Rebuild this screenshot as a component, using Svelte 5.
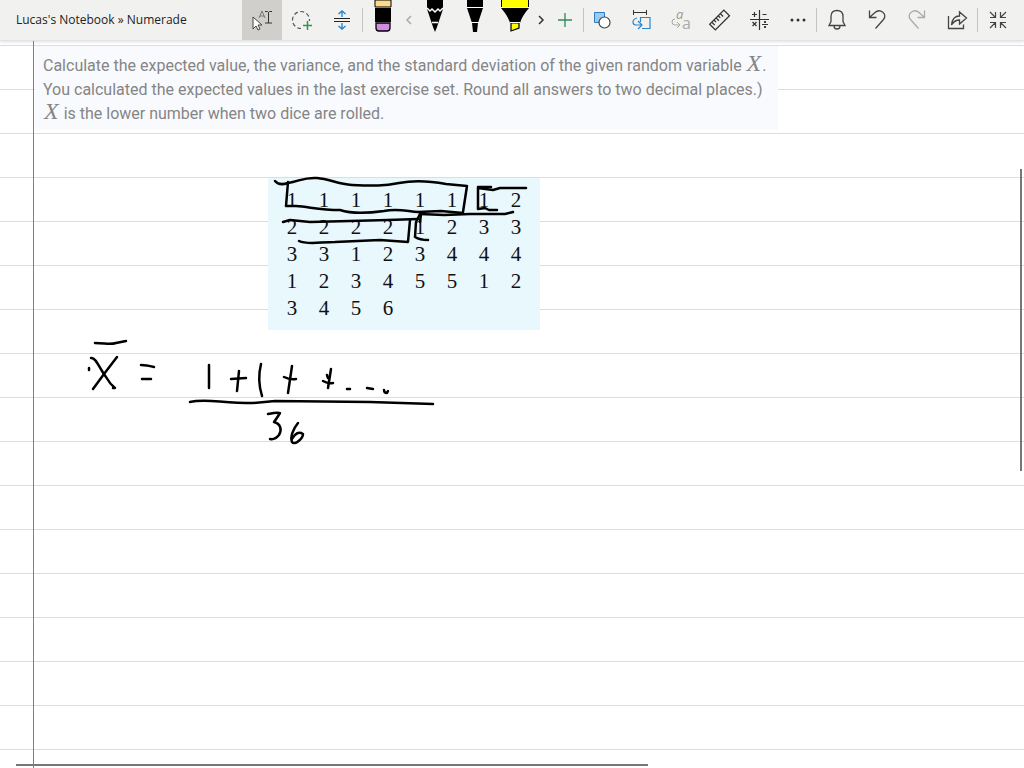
<script>
  const rolls = [
    [1, 1, 1, 1, 1, 1, 1, 2],
    [2, 2, 2, 2, 1, 2, 3, 3],
    [3, 3, 1, 2, 3, 4, 4, 4],
    [1, 2, 3, 4, 5, 5, 1, 2],
    [3, 4, 5, 6],
  ];

  // pen strokes, in page coordinates
  const strokes = [
    // boxes round the dice rolls
    "M275 181 Q279 186 288 183 C300 181 304 177 317 178 C330 179 337 184 352 185 C374 186 384 186 399 183 C414 180 430 181 446 184 L467 186 L463 212",
    "M288 182 L286 206 L296 206 C310 207 320 210 340 210 C352 214 370 213 384 211 C397 208 406 211 418 212 L441 211 L463 213",
    "M526 188 L500 188 L493 190 L478 188 L478 209 L485 208 L489 210 L497 210",
    "M478 187 L491 187",
    "M283 222 L290 220 L310 222 L350 221 L388 220 L418 219",
    "M299 241 C307 245 320 242 335 242 L380 240 L408 242 L410 220",
    "M420 214 L416 222 L415 237 Q420 240 428 240",
    "M420 214 L444 215 L470 214 L505 214 L513 212",
    "M421 214 L420 222",
    // x bar =
    "M95 343 C105 343 110 345 116 343 L126 341",
    "M91 358 C96 357 99 368 106 377 Q110 384 115 388 L113 388",
    "M117 357 L104 374 L93 389",
    "M89 368 L89 370",
    "M141 365 Q146 365 154 367",
    "M142 379 L151 379",
    // numerator
    "M209 365 L209 388",
    "M231 379 L246 378",
    "M239 371 L237 391",
    "M261 364 Q257 380 262 396",
    "M284 377 Q290 380 296 379",
    "M292 366 L288 393",
    "M323 381 Q328 384 333 383",
    "M331 369 L328 388",
    "M327 375 L328 378",
    "M347 389 L350 389",
    "M367 388 L373 389",
    "M384 390 Q384 393 387 393 L388 391",
    // fraction bar
    "M190 402 C205 398 220 403 253 403 L275 401 L370 402 L433 404",
    // denominator
    "M268 414 Q278 412 280 413 Q277 418 274 422 C281 424 282 430 279 435 Q275 440 270 439",
    "M298 423 C293 429 290 437 292 442 C295 446 303 438 303 434 Q297 430 292 439",
  ];
</script>

<div class="page">
  <header>
    <h1>Lucas's Notebook » Numerade</h1>
    <div class="group">
      <button class="tool active" aria-label="Select and type">
        <svg width="24" height="24" viewBox="0 0 24 24">
          <path d="M3 9v12l3-3 2 4 2-1-2-4h4z" fill="#fff" stroke="#444" />
          <path d="M9 10l3-7 3 7M10 8h4" fill="none" stroke="#777" />
          <path d="M15 3.500h2.500l1 1 1-1h2.500M18.500 4v11M15 15h7" fill="none" stroke="#333" />
        </svg>
      </button>
      <button class="tool" aria-label="Lasso select">
        <svg width="24" height="24" viewBox="0 0 24 24">
          <circle cx="11" cy="12" r="8.5" fill="none" stroke="#555" stroke-width="1.2" stroke-dasharray="4 2.5" />
          <path d="M11 13h12v10h-12z" fill="#f2f2f1" />
          <path d="M17.500 13v9M13 17.500h9" stroke="#2c9a4c" stroke-width="1.5" />
        </svg>
      </button>
      <button class="tool" aria-label="Insert space">
        <svg width="24" height="24" viewBox="0 0 24 24">
          <path d="M4 10.500h16M4 13.500h16" stroke="#222" stroke-width="1.2" />
          <path d="M12 9V3M8.500 6l3.500-3 3.500 3M12 15v6M8.500 18l3.500 3 3.500-3" fill="none" stroke="#2a86cc" stroke-width="1.400" />
        </svg>
      </button>
    </div>
    <div class="group">
      <button class="tool" aria-label="Eraser">
        <svg width="40" height="40" viewBox="0 0 40 40">
          <path d="M12 0h16v7h-16z" fill="#f9d98a" stroke="#000" />
          <path d="M12 8h16v14h-16z" />
          <path d="M13 23h14v5q0 3-3 3h-8q-3 0-3-3z" fill="#d18be0" stroke="#000" stroke-width="1.300" />
        </svg>
      </button>
      <button class="step" aria-label="Previous pens">
        <svg width="8" height="12" viewBox="0 0 8 12"><path d="M6 2L2 6l4 4" fill="none" stroke="#aaa" stroke-width="1.500" /></svg>
      </button>
      <button class="tool" aria-label="Pencil">
        <svg width="40" height="40" viewBox="0 0 40 40">
          <path d="M12 0h16v9l-6 18-2 5-2-5-6-18z" />
          <path d="M12 8l3 3 2-2 3 3 3-3 2 2 3-3M17 22.500h6" fill="none" stroke="#fff" stroke-width="1.500" />
        </svg>
      </button>
      <button class="tool" aria-label="Pen">
        <svg width="40" height="40" viewBox="0 0 40 40">
          <path d="M12 0h16v8l-5 15-1 9h-4l-1-9-5-15z" />
          <path d="M12 7.500h16M16 22.500h8" stroke="#fff" />
        </svg>
      </button>
      <button class="tool" aria-label="Highlighter">
        <svg width="40" height="40" viewBox="0 0 40 40">
          <path d="M6 0h28v8q-7 8-9 15h-10q-2-7-9-15z" />
          <path d="M7 0h26v7h-26z" fill="#ff0" />
          <path d="M16 23h8v5l-8 3z" fill="#ff0" stroke="#000" stroke-width="1.200" />
          <path d="M6 7.500h28M15 22.500h10" stroke="#fff" />
        </svg>
      </button>
      <button class="step" aria-label="More pens">
        <svg width="8" height="12" viewBox="0 0 8 12"><path d="M2 2l4 4-4 4" fill="none" stroke="#333" stroke-width="1.500" /></svg>
      </button>
      <button class="add" aria-label="Add pen">
        <svg width="16" height="16" viewBox="0 0 16 16"><path d="M8 1v14M1 8h14" stroke="#2c8a5a" stroke-width="1.300" /></svg>
      </button>
    </div>
    <div class="group wide">
      <button class="tool" aria-label="Shapes">
        <svg width="24" height="24" viewBox="0 0 24 24">
          <path d="M2.500 4.500h10v10h-10z" fill="#9bcbf0" stroke="#2a7fc4" />
          <circle cx="12.500" cy="14.500" r="5.500" fill="#fff" stroke="#444" stroke-width="1.200" />
        </svg>
      </button>
      <button class="tool" aria-label="Ink to shape">
        <svg width="24" height="24" viewBox="0 0 24 24">
          <path d="M2.500 2v5M15.500 2v5M2 4.500h14" stroke="#333" />
          <path d="M9.500 14v-4.500h9.500v11h-8M6 10q-4 1-4 4t3 3h5M7 13l4 4-4 4" fill="none" stroke="#2a86cc" stroke-width="1.200" />
        </svg>
      </button>
      <button class="tool" aria-label="Ink to text" disabled>
        <svg width="32" height="36" viewBox="0 0 32 36">
          <text x="10" y="17" font-size="13" font-style="italic" fill="#999">a</text>
          <text x="16" y="27" font-size="16" fill="#aaa">a</text>
          <path d="M9 17q-3 0-3 3 0 3 3 3h5M11 20l3 3-3 3" fill="none" stroke="#aaa" />
        </svg>
      </button>
      <button class="tool" aria-label="Ruler">
        <svg width="24" height="24" viewBox="0 0 24 24">
          <g fill="none" stroke="#333" stroke-width="1.300" transform="rotate(-45 12 12)">
            <path d="M1 7h20v8h-20z" />
            <path d="M4 7v4M7 7v3M10 7v4M13 7v3M16 7v4" />
          </g>
        </svg>
      </button>
      <button class="tool" aria-label="Math">
        <svg width="24" height="24" viewBox="0 0 24 24">
          <path d="M11.500 2v20M2 11.500h19M4 6.500h5M6.500 4v5M14.500 6.500h4M4.500 14l4 4M8.500 14l-4 4M14 16.500h6" stroke="#333" stroke-width="1.200" />
          <circle cx="17" cy="14" r="1" /><circle cx="17" cy="19" r="1" />
        </svg>
      </button>
      <button class="more" aria-label="More options">
        <svg width="16" height="4" viewBox="0 0 16 4" fill="#333"><circle cx="2" cy="2" r="1.500" /><circle cx="8" cy="2" r="1.500" /><circle cx="14" cy="2" r="1.500" /></svg>
      </button>
    </div>
    <div class="group">
      <button class="tool" aria-label="Notifications">
        <svg width="24" height="24" viewBox="0 0 24 24" fill="none" stroke="#444" stroke-width="1.300">
          <path d="M4 17.500h16l-2-4v-5q0-6-6-6t-6 6v5zM9 18q0 3 3 3t3-3" />
        </svg>
      </button>
      <button class="tool" aria-label="Undo">
        <svg width="24" height="24" viewBox="0 0 24 24" fill="none" stroke="#444" stroke-width="1.300">
          <path d="M4.500 2.500v7h7M5 9L10 4.500C15 0 23 6 18.500 11.500L10.500 20.500" />
        </svg>
      </button>
      <button class="tool" aria-label="Redo" disabled>
        <svg width="24" height="24" viewBox="0 0 24 24" fill="none" stroke="#aaa" stroke-width="1.300">
          <path d="M19.500 2.500v7h-7M19 9L14 4.500C9 0 1 6 5.500 11.500L13.500 20.500" />
        </svg>
      </button>
      <button class="tool" aria-label="Share">
        <svg width="24" height="24" viewBox="0 0 24 24" fill="none" stroke="#444" stroke-width="1.300">
          <path d="M3.500 8v12.500h15v-4M6.500 17q1-9 8-9v-4l7 6-7 6v-4q-5 0-8 5z" />
        </svg>
      </button>
    </div>
    <div class="group">
      <button class="tool" aria-label="Exit full screen">
        <svg width="24" height="24" viewBox="0 0 24 24" fill="none" stroke="#444" stroke-width="1.200">
          <path d="M4 4l5 5M9.500 4v5.500h-5.500M20 4l-5 5M14.500 4v5.500h5.500M4 20l5-5M9.500 20v-5.500h-5.500M20 20l-5-5M14.500 20v-5.500h5.500" />
        </svg>
      </button>
    </div>
  </header>

  <main>
    <!-- problem statement -->
    <section>
      <p>
        Calculate the expected value, the variance, and the standard deviation of the given random variable <i>X</i>.<br />
        You calculated the expected values in the last exercise set. Round all answers to two decimal places.)<br />
        <i>X</i> is the lower number when two dice are rolled.
      </p>
    </section>

    <!-- every lower number -->
    <table>
      <tbody>
        {#each rolls as row}
          <tr>
            {#each row as n}
              <td>{n}</td>
            {/each}
          </tr>
        {/each}
      </tbody>
    </table>
  </main>

  <svg class="ink" aria-hidden="true">
    {#each strokes as d}
      <path {d} />
    {/each}
  </svg>
  <div class="bar down"></div>
  <div class="bar across"></div>
</div>

<style>
  :global(body) {
    margin: 0;
  }
  .page {
    position: relative;
    display: flex;
    flex-direction: column;
    min-height: 100vh;
    overflow: hidden;
    background: #fff;
  }
  header {
    display: flex;
    align-items: center;
    height: 40px;
    padding-right: 6px;
    border-bottom: 1px solid #e2e3e4;
    background: #f1f1f0;
    box-shadow: 0 1px 3px #dde0e2;
  }
  h1 {
    flex: 1;
    margin: 0;
    padding-left: 16px;
    font: 12px/20px "Open Sans", sans-serif;
    color: #222;
    white-space: nowrap;
  }
  .group {
    display: flex;
    align-items: center;
    height: 40px;
  }
  .group + .group::before {
    content: "";
    width: 1px;
    height: 24px;
    background: #c4c4c4;
  }
  button {
    display: flex;
    justify-content: center;
    align-items: center;
    height: 40px;
    padding: 0;
    border: 0;
    background: none;
  }
  .tool {
    width: 40px;
  }
  .wide .tool {
    width: 39px;
  }
  .active {
    background: #d0cfcc;
  }
  .step {
    width: 12px;
  }
  .add {
    width: 36px;
  }
  .more {
    width: 37px;
  }
  header text {
    font-family: "Open Sans", sans-serif;
  }
  main {
    flex: 1;
    background:
      linear-gradient(#d9585e, #d9585e) 33px 0 / 1px 100% no-repeat,
      linear-gradient(#c8e5ec 1px, transparent 1px) 0 4px / 100% 44px;
  }
  section {
    width: fit-content;
    margin: 5px 0 0 35px;
    padding: 8px 12px 4px 8px;
    background: #f8fafd;
  }
  p {
    margin: 0;
    font: 16px/24px Roboto, sans-serif;
    color: #858585;
  }
  i {
    margin: 0 1px;
    font-family: "Liberation Serif", serif;
    font-size: 24px;
    line-height: 16px;
  }
  table {
    margin: 48px 0 0 268px;
    padding: 9px 8px 8px;
    border-spacing: 0;
    background: #e8f8fd;
  }
  td {
    width: 32px;
    height: 27px;
    padding: 0;
    font: 21px/27px "Liberation Serif", serif;
    text-align: center;
    color: #111;
  }
  .ink {
    position: absolute;
    inset: 0;
    width: 100%;
    height: 100%;
    pointer-events: none;
    fill: none;
    stroke: #000;
    stroke-width: 2.5px;
    stroke-linecap: round;
    stroke-linejoin: round;
  }
  .bar {
    position: absolute;
    background: #777;
  }
  .down {
    top: 22%;
    right: 2px;
    width: 2px;
    height: 302px;
  }
  .across {
    left: 16px;
    bottom: 2px;
    width: 632px;
    height: 2px;
  }
</style>
